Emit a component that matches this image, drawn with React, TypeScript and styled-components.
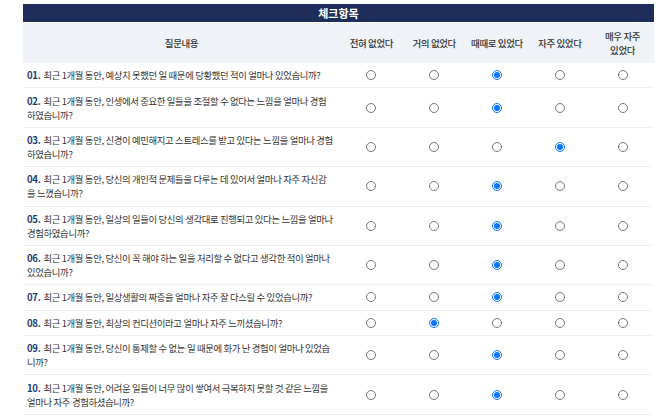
import React from "react";
import styled, { createGlobalStyle } from "styled-components";

const Global = createGlobalStyle`
  html, body { margin: 0; padding: 0; background: #ffffff; }
  body { font-family: "Noto Sans CJK KR", "Noto Sans", sans-serif; }
`;

const Page = styled.div`
  padding: 4px 4px 0 23px;
  width: 631px;
`;

const Title = styled.div`
  background: #1e2d5a;
  color: #ffffff;
  font-size: 11px;
  font-weight: 700;
  text-align: center;
  height: 18px;
  line-height: 18px;
  border-bottom: 1px solid #ffffff;
`;

const Grid = styled.div`
  display: grid;
  grid-template-columns: 317px repeat(5, 1fr);
`;

const HeadCell = styled.div`
  background: #eff3f8;
  height: 40px;
  display: flex;
  align-items: center;
  justify-content: center;
  text-align: center;
  font-size: 9.5px;
  font-weight: 500;
  line-height: 14px;
  color: #333333;
  letter-spacing: -0.4px;
  padding: 0 1px;
  white-space: pre-line;
`;

const QCell = styled.div`
  font-size: 9.4px;
  line-height: 14px;
  color: #333333;
  letter-spacing: -0.35px;
  padding: 5.2px 6px 5.2px 4px;
  border-bottom: 1px solid #eeeeee;
  display: flex;
  align-items: center;
`;

const Num = styled.b`
  color: #1c3c72;
  font-weight: 700;
  font-size: 9.6px;
  margin-right: 3px;
`;

const RCell = styled.div`
  border-bottom: 1px solid #eeeeee;
  display: flex;
  align-items: center;
  justify-content: center;
`;

const Radio = styled.input.attrs({ type: "radio" })`
  width: 10px;
  height: 10px;
  margin: 0;
  accent-color: #0a74ff;
`;

const options = ["전혀 없었다", "거의 없었다", "때때로 있었다", "자주 있었다", "매우 자주\n있었다"];

const questions: { q: string; a: number }[] = [
  { q: "최근 1개월 동안, 예상치 못했던 일 때문에 당황했던 적이 얼마나 있었습니까?", a: 2 },
  { q: "최근 1개월 동안, 인생에서 중요한 일들을 조절할 수 없다는 느낌을 얼마나 경험하였습니까?", a: 2 },
  { q: "최근 1개월 동안, 신경이 예민해지고 스트레스를 받고 있다는 느낌을 얼마나 경험하였습니까?", a: 3 },
  { q: "최근 1개월 동안, 당신의 개인적 문제들을 다루는 데 있어서 얼마나 자주 자신감을 느꼈습니까?", a: 2 },
  { q: "최근 1개월 동안, 일상의 일들이 당신의 생각대로 진행되고 있다는 느낌을 얼마나 경험하였습니까?", a: 2 },
  { q: "최근 1개월 동안, 당신이 꼭 해야 하는 일을 처리할 수 없다고 생각한 적이 얼마나 있었습니까?", a: 2 },
  { q: "최근 1개월 동안, 일상생활의 짜증을 얼마나 자주 잘 다스릴 수 있었습니까?", a: 2 },
  { q: "최근 1개월 동안, 최상의 컨디션이라고 얼마나 자주 느끼셨습니까?", a: 1 },
  { q: "최근 1개월 동안, 당신이 통제할 수 없는 일 때문에 화가 난 경험이 얼마나 있었습니까?", a: 2 },
  { q: "최근 1개월 동안, 어려운 일들이 너무 많이 쌓여서 극복하지 못할 것 같은 느낌을 얼마나 자주 경험하셨습니까?", a: 2 },
];

export default function App() {
  return (
    <>
      <Global />
      <Page>
        <Title>체크항목</Title>
        <Grid>
          <HeadCell>질문내용</HeadCell>
          {options.map((o) => (
            <HeadCell key={o}>{o}</HeadCell>
          ))}
          {questions.map((item, i) => {
            const n = String(i + 1).padStart(2, "0");
            return (
              <React.Fragment key={n}>
                <QCell>
                  <span>
                    <Num>{n}.</Num>
                    {item.q}
                  </span>
                </QCell>
                {options.map((o, j) => (
                  <RCell key={o}>
                    <Radio name={`q${n}`} defaultChecked={j === item.a} />
                  </RCell>
                ))}
              </React.Fragment>
            );
          })}
        </Grid>
      </Page>
    </>
  );
}
